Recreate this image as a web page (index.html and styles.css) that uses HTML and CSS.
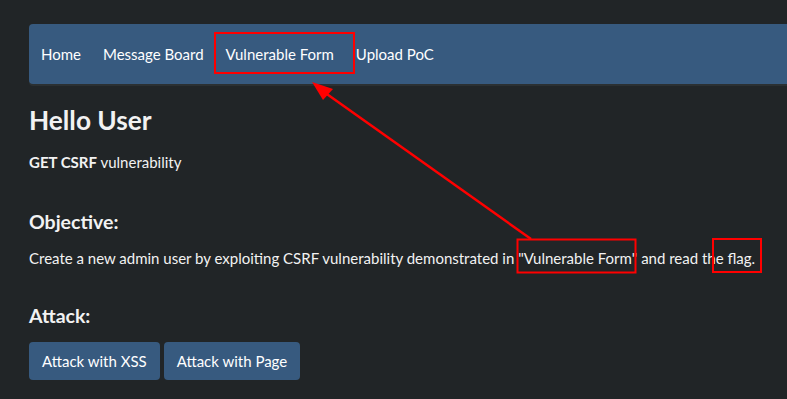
FILE: index.html
```html
<!DOCTYPE html>
<html lang="en">
<head>
    <meta charset="UTF-8">
    <meta name="viewport" content="width=device-width, initial-scale=1.0">
    <title>CSRF Lab</title>
    <link rel="stylesheet" href="styles.css">
</head>
<body>
    <nav class="navbar">
        <a href="#" class="nav-link">Home</a>
        <a href="#" class="nav-link">Message Board</a>
        <a href="#" class="nav-link">Vulnerable Form</a>
        <a href="#" class="nav-link">Upload PoC</a>
    </nav>

    <div class="container">
        <h3 class="title">Hello User</h3>
        <p class="intro"><strong>GET CSRF</strong> vulnerability</p>

        <h5 class="section">Objective:</h5>
        <p class="objective">Create a new admin user by exploiting CSRF vulnerability demonstrated in "Vulnerable Form" and read the flag.</p>

        <h5 class="section attack">Attack:</h5>
        <div class="buttons">
            <button class="btn">Attack with XSS</button>
            <button class="btn">Attack with Page</button>
        </div>
    </div>

    <!-- Annotations -->
    <svg class="annotations" width="787" height="399" viewBox="0 0 787 399">
        <rect x="215" y="33" width="139" height="40" fill="none" stroke="#ff0000" stroke-width="2"/>
        <rect x="517.5" y="239.5" width="118" height="33" fill="none" stroke="#ff0000" stroke-width="2"/>
        <rect x="713" y="239" width="48" height="33" fill="none" stroke="#ff0000" stroke-width="2"/>
        <line x1="531" y1="239" x2="324" y2="92" stroke="#ff0000" stroke-width="2.5"/>
        <polygon points="312,82 333,89 323,100" fill="#ff0000"/>
    </svg>
</body>
</html>
```

FILE: styles.css
```css
/* General Styles */
body {
    font-family: Lato, "Open Sans", sans-serif;
    font-size: 15px;
    line-height: 1.5;
    margin: 0;
    background-color: #212527;
    color: #f2f2f2;
    overflow: hidden;
}

/* Navbar */
.navbar {
    display: flex;
    align-items: center;
    height: 60px;
    margin: 24px 0 0 29px;
    padding-left: 1px;
    background-color: #375a7f;
    border-radius: 4px 0 0 4px;
    box-shadow: 0 2px 0 #2b3032;
}

.nav-link {
    color: #ffffff;
    text-decoration: none;
    padding: 0 11px;
    font-size: 15px;
}

.nav-link:hover {
    color: #d0dcea;
}

/* Content */
.container {
    padding: 0 0 0 29px;
}

.title {
    font-size: 26.25px;
    font-weight: 700;
    line-height: 1.2;
    margin: 21px 0 14px;
}

.intro {
    margin: 0;
}

.section {
    font-size: 19.5px;
    font-weight: 700;
    line-height: 1.2;
    margin: 36.5px 0 13.8px;
}

.section.attack {
    margin-top: 35px;
    margin-bottom: 14.8px;
}

.objective {
    margin: 0;
    white-space: nowrap;
}

/* Buttons */
.buttons {
    display: flex;
    gap: 4px;
}

.btn {
    font-family: inherit;
    font-size: 15px;
    line-height: 22.5px;
    height: 38px;
    padding: 0 13px;
    color: #ffffff;
    background-color: #375a7f;
    border: none;
    border-radius: 4px;
    cursor: pointer;
}

.btn:hover {
    background-color: #2f4d6c;
}

/* Annotation overlay */
.annotations {
    position: absolute;
    top: 0;
    left: 0;
    pointer-events: none;
}
```
